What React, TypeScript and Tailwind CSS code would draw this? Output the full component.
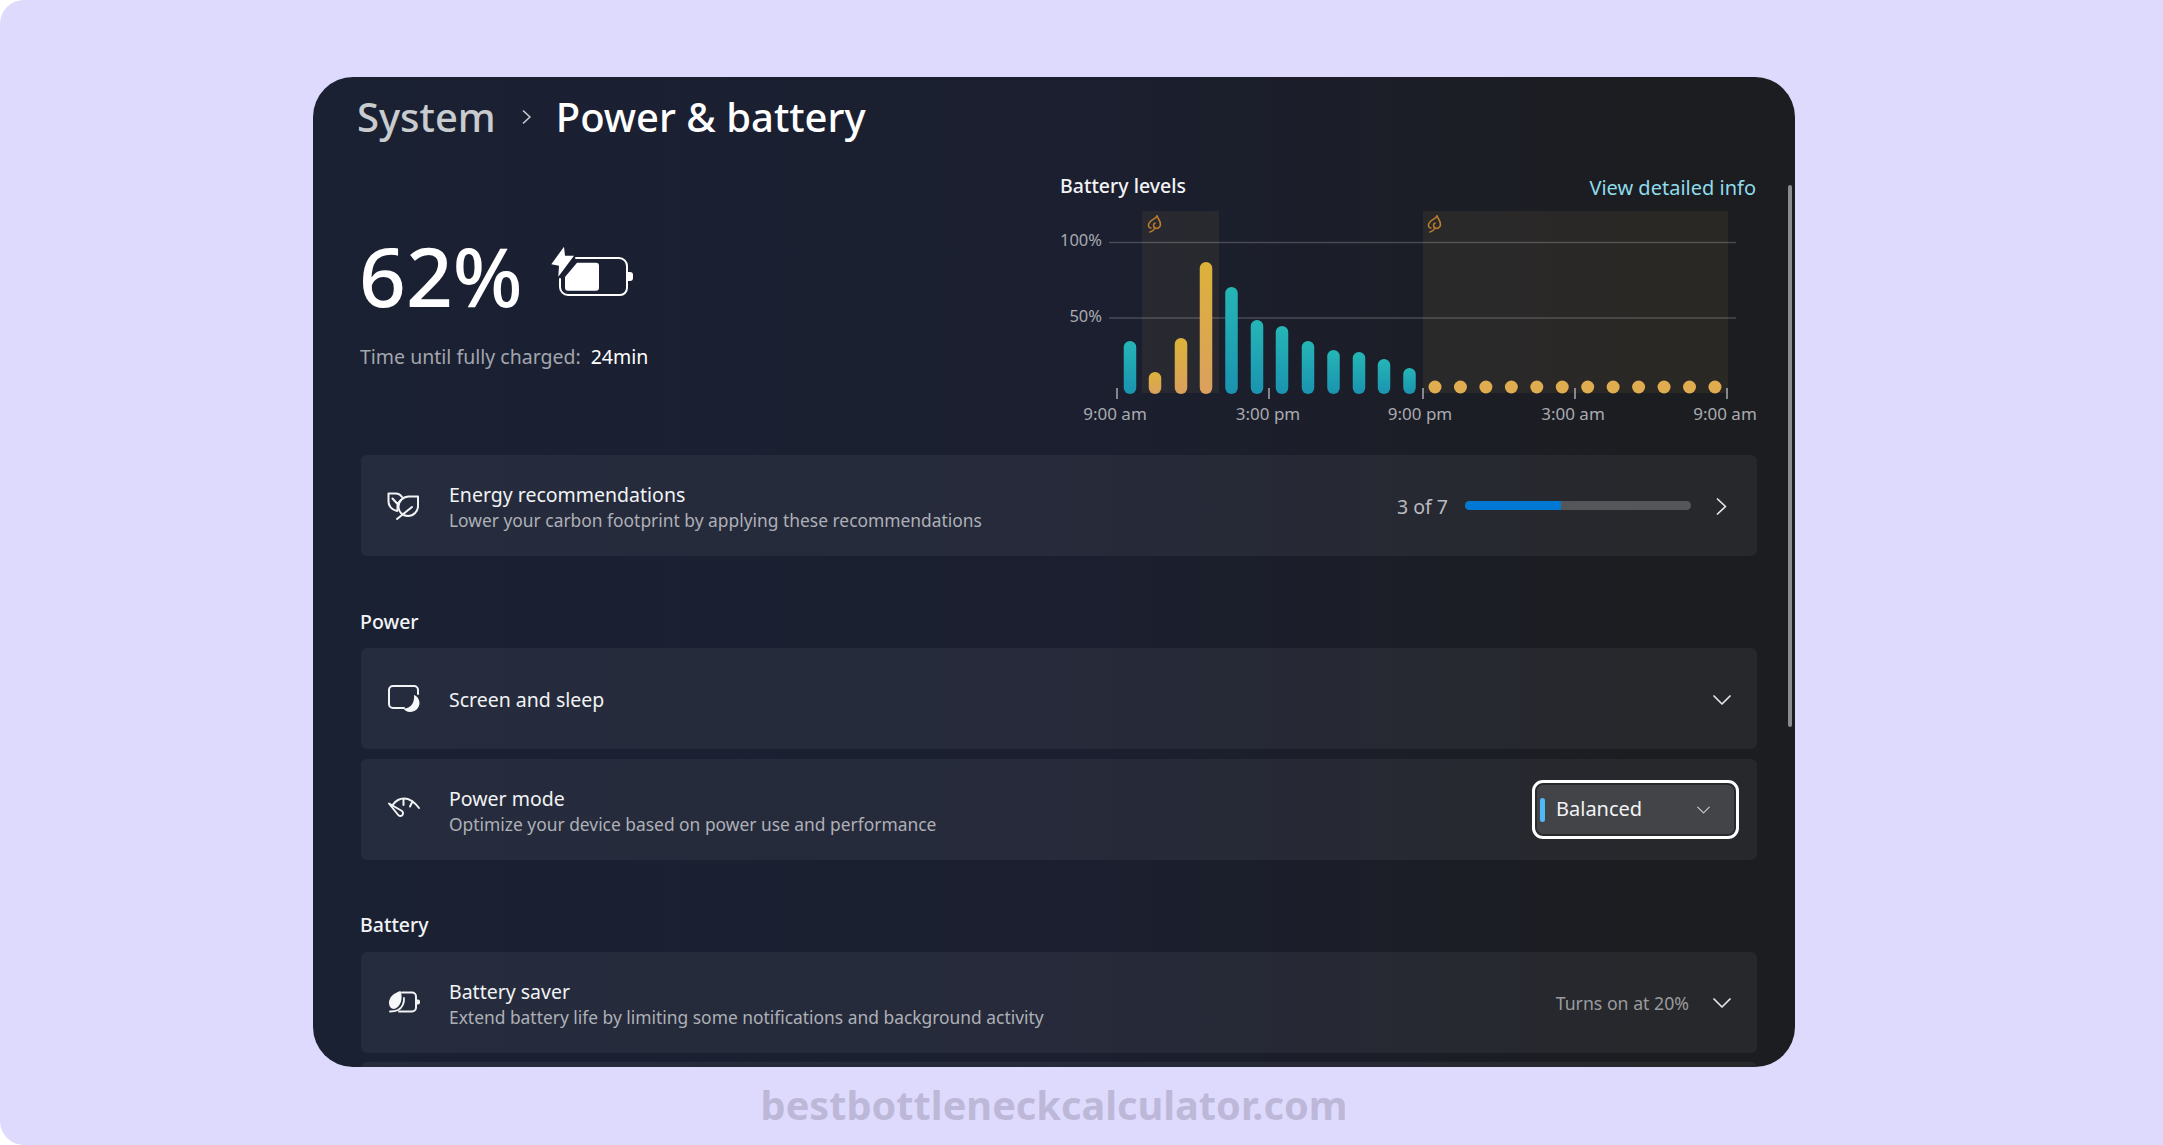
import React from 'react'

const ChevronDown = ({ className = 'w-[18px] h-[10px] text-[#e6e7ea]' }: { className?: string }) => (
  <svg viewBox="0 0 18 10" fill="none" className={className}>
    <path d="M1 1l8 8 8-8" stroke="currentColor" strokeWidth="1.7" strokeLinecap="round" strokeLinejoin="round" />
  </svg>
)

const ChevronRight = () => (
  <svg viewBox="0 0 11 17" fill="none" className="w-[11px] h-[17px] text-[#e6e7ea]">
    <path d="M1.5 1l8 7.5-8 7.5" stroke="currentColor" strokeWidth="1.7" strokeLinecap="round" strokeLinejoin="round" />
  </svg>
)

const LeavesIcon = () => (
  <svg viewBox="0 0 34 32" fill="none" stroke="#f2f3f5" strokeWidth="2" strokeLinecap="round" strokeLinejoin="round" className="w-[34px] h-[32px]">
    <path d="M15 7c-1.500-2.200-3.500-3.500-6-3.500H1.500V11c0 4.500 3 8.500 8.500 10" />
    <path d="M5.500 8.500l5 5.500 3.500-4M10.500 14v6.500" />
    <path d="M31 6.500H22c-6 0-10.500 4.500-10.500 10 0 5.500 4 9.500 9.500 9.500s10-4.500 10-10z" />
    <path d="M10 29l15-12" />
  </svg>
)

const ScreenSleepIcon = () => (
  <svg viewBox="0 0 34 32" fill="none" className="w-[34px] h-[32px]">
    <path d="M17 25H6a4 4 0 0 1-4-4V7a4 4 0 0 1 4-4h21a4 4 0 0 1 4 4v4" stroke="#f2f3f5" strokeWidth="2" strokeLinecap="round" />
    <path d="M27 12c3.300 1 5.500 4.500 5.500 8 0 5-4.500 9-9.500 9-3 0-5-1.500-6.500-3.500C23 26 28 20 27 12z" fill="#f7f8f9" />
  </svg>
)

const GaugeIcon = () => (
  <svg viewBox="0 0 34 30" fill="none" stroke="#f2f3f5" strokeWidth="2" strokeLinecap="round" strokeLinejoin="round" className="w-[34px] h-[30px]">
    <path d="M6 9.500C9 5.500 13 3.500 17 3.500c5.500 0 10.500 3.500 15 9.500" />
    <path d="M16.500 4v6M25.500 6.500l-2.500 5" />
    <path d="M2 8.500l13 7.500c2 1.500 1 5.500-2 5-1-.2-1.700-.8-2.200-1.500z" />
  </svg>
)

const BatteryLeafIcon = () => (
  <svg viewBox="0 0 34 26" fill="none" className="w-[34px] h-[26px]">
    <path d="M15 2.500h10a4 4 0 0 1 4 4v11a4 4 0 0 1-4 4H12" stroke="#f2f3f5" strokeWidth="2" strokeLinecap="round" />
    <path d="M29.500 9.500h1.500a2 2 0 0 1 2 2v1a2 2 0 0 1-2 2h-1.500z" fill="#f2f3f5" />
    <path d="M13.500 1C7 3 2 7 2 13c0 3 2 6 5 6 4-1 7-5 7.500-10 .3-3 0-6-1-8z" fill="#f7f8f9" />
    <path d="M17 8c.5 5-2 10-6 12-2 1-5 1.500-8 1.500" stroke="#f2f3f5" strokeWidth="1.800" strokeLinecap="round" />
  </svg>
)

const ChargingBatteryIcon = () => (
  <svg viewBox="0 0 110 80" fill="none" className="w-[110px] h-[80px] shrink-0">
    <path d="M25 21.700 12.300 39.300l7.700 1.400-.7 11L35 30.700h-9z" fill="#ffffff" />
    <path d="M37 33h43a8 8 0 0 1 8 8v22a7 7 0 0 1-7 7H29a8 8 0 0 1-8-8v-8" stroke="#ffffff" strokeWidth="2" strokeLinecap="round" />
    <path d="M38 37.700h19a3 3 0 0 1 3 3v22a3 3 0 0 1-3 3H29a3 3 0 0 1-3-3V52z" fill="#ffffff" />
    <path d="M89 47h2a3 3 0 0 1 3 3v3a3 3 0 0 1-3 3h-2z" fill="#ffffff" />
  </svg>
)

const tealBars = [
  { x: 1130, top: 341 },
  { x: 1231.5, top: 287 },
  { x: 1257, top: 320 },
  { x: 1282, top: 326 },
  { x: 1308, top: 341 },
  { x: 1333.5, top: 350 },
  { x: 1359, top: 352 },
  { x: 1384, top: 359 },
  { x: 1409.5, top: 368 },
]

const amberBars = [
  { x: 1155, top: 372 },
  { x: 1181, top: 338 },
  { x: 1206, top: 262 },
]

const dots = Array.from({ length: 12 }, (_, i) => 1435 + i * 25.45)

const ticks = [
  { x: 1117, label: '9:00 am', cx: 1115 },
  { x: 1269, label: '3:00 pm', cx: 1268 },
  { x: 1423, label: '9:00 pm', cx: 1420 },
  { x: 1575, label: '3:00 am', cx: 1573 },
  { x: 1727, label: '9:00 am', cx: 1725 },
]

const LeafMark = ({ x, y }: { x: number; y: number }) => (
  <g transform={`translate(${x} ${y})`} fill="none" stroke="#b87b2c" strokeWidth="1.600" strokeLinecap="round" strokeLinejoin="round">
    <path d="M10 1C9 4 2 5 1.500 10c-.2 2 1 3 2.500 3" />
    <path d="M10 1c1 3 4 5 3.500 9-.5 3-3.500 4-5.500 3-2-1-2-4 0-5" />
    <path d="M8 13c-1 2-3 3.500-5 4" />
  </g>
)

const BatteryChart = () => (
  <svg viewBox="1040 201 740 229" className="w-[740px] h-[229px] block">
    <defs>
      <linearGradient id="teal" x1="0" y1="0" x2="0" y2="1">
        <stop offset="0" stopColor="#25b6b6" />
        <stop offset="1" stopColor="#1a93b0" />
      </linearGradient>
      <linearGradient id="amber" x1="0" y1="0" x2="0" y2="1">
        <stop offset="0" stopColor="#dcb23a" />
        <stop offset="1" stopColor="#dba05e" />
      </linearGradient>
    </defs>
    <rect x="1142" y="211" width="77" height="182" fill="#d9b25f" fillOpacity="0.07" />
    <rect x="1423" y="211" width="305" height="182" fill="#d9b25f" fillOpacity="0.08" />
    <line x1="1109" x2="1736" y1="242.500" y2="242.500" stroke="#ffffff" strokeOpacity="0.2" strokeWidth="1.500" />
    <line x1="1109" x2="1736" y1="318" y2="318" stroke="#ffffff" strokeOpacity="0.2" strokeWidth="1.500" />
    <text x="1102" y="246" textAnchor="end" fontSize="16.500" fill="#a9abb0">100%</text>
    <text x="1102" y="322" textAnchor="end" fontSize="16.500" fill="#a9abb0">50%</text>
    <LeafMark x={1147} y={215} />
    <LeafMark x={1427} y={215} />
    {tealBars.map((b) => (
      <rect key={b.x} x={b.x - 6.25} y={b.top} width="12.500" height={394 - b.top} rx="6.250" fill="url(#teal)" />
    ))}
    {amberBars.map((b) => (
      <rect key={b.x} x={b.x - 6.25} y={b.top} width="12.500" height={394 - b.top} rx="6.250" fill="url(#amber)" />
    ))}
    {dots.map((x) => (
      <circle key={x} cx={x} cy="387" r="6.500" fill="#dfac4f" />
    ))}
    {ticks.map((t) => (
      <g key={t.x + t.label}>
        <line x1={t.x} x2={t.x} y1="388" y2="399" stroke="#a9abb0" strokeWidth="1.500" />
        <text x={t.cx} y="420" textAnchor="middle" fontSize="17" fill="#a9abb0">{t.label}</text>
      </g>
    ))}
  </svg>
)

const SettingRow = ({
  icon,
  title,
  subtitle,
  trailing,
}: {
  icon: React.ReactNode
  title: string
  subtitle?: string
  trailing: React.ReactNode
}) => (
  <div className="flex items-center h-[101px] rounded-md bg-white/[0.05] pl-[26px]">
    <div className="flex items-center justify-center w-[34px] shrink-0">{icon}</div>
    <div className="ml-[28px] pt-[2px] flex flex-col">
      <div className="text-[19.500px] leading-[26px] text-[#f2f3f5]">{title}</div>
      {subtitle && <div className="text-[17.400px] leading-[24px] text-[#aeb0b7]">{subtitle}</div>}
    </div>
    <div className="ml-auto flex items-center">{trailing}</div>
  </div>
)

export default function App() {
  return (
    <div className="bg-white">
      <div className="w-full h-[1145px] overflow-hidden rounded-l-[24px] bg-[#dedafe] pl-[313px] pt-[77px] font-['Noto_Sans',sans-serif]">
        <div className="relative w-[1482px] h-[990px] overflow-hidden rounded-[40px] bg-gradient-to-r from-[#1a2133] via-[#1b1f30] via-50% to-[#1c1d21] to-90%">
          {/* Scrollbar */}
          <div className="absolute left-[1475px] top-[108px] w-[4px] h-[542px] rounded-full bg-[#8a8b8e]" />

          {/* Breadcrumb */}
          <div className="flex items-center h-[80px] pl-[44px] text-[40px] font-medium">
            <span className="text-[#c9cccf]">System</span>
            <svg viewBox="0 0 10 14" fill="none" className="w-[10px] h-[14px] ml-[26px] mr-[24px]">
              <path d="M1.500 1l6.500 6-6.500 6" stroke="#c9cccf" strokeWidth="1.600" strokeLinecap="round" strokeLinejoin="round" />
            </svg>
            <span className="text-white">Power &amp; battery</span>
          </div>

          {/* Battery status and chart */}
          <div className="flex h-[298px] pl-[47px] pr-[15px]">
            <div className="flex flex-col pt-[68px]">
              <div className="flex h-[90px]">
                <span className="w-[180px] self-end text-[82px] leading-[80px] font-medium text-white -ml-[1px]">62%</span>
                <ChargingBatteryIcon />
              </div>
              <div className="mt-[28px] flex items-center h-[28px] text-[19.500px]">
                <span className="text-[#a3a6ad]">Time until fully charged:</span>
                <span className="ml-[10px] text-white">24min</span>
              </div>
            </div>
            <div className="ml-auto w-[740px] flex flex-col pt-[16px]">
              <div className="flex items-center justify-between h-[28px] pl-[20px] pr-[24px]">
                <span className="pb-[2px] text-[19.500px] font-medium text-[#f2f3f5]">Battery levels</span>
                <span className="pt-[2px] text-[20px] text-[#8fdcec]">View detailed info</span>
              </div>
              <BatteryChart />
            </div>
          </div>

          {/* Settings list */}
          <div className="w-[1396px] ml-[48px]">
            <SettingRow
              icon={<LeavesIcon />}
              title="Energy recommendations"
              subtitle="Lower your carbon footprint by applying these recommendations"
              trailing={
                <div className="flex items-center pr-[30px]">
                  <span className="pt-[2px] text-[19.500px] text-[#b9bbc0]">3 of 7</span>
                  <div className="ml-[17px] w-[226px] h-[9px] rounded-full bg-[#55565a] overflow-hidden">
                    <div className="w-[96px] h-full bg-[#0078d4]" />
                  </div>
                  <div className="ml-[25px] pt-[2px]"><ChevronRight /></div>
                </div>
              }
            />

            <div className="pt-[52px] pb-[12px] text-[19.500px] leading-[28px] font-medium text-[#f2f3f5] -ml-[1px]">Power</div>
            <SettingRow
              icon={<ScreenSleepIcon />}
              title="Screen and sleep"
              trailing={<div className="pr-[26px] pt-[2px]"><ChevronDown /></div>}
            />
            <div className="h-[10px]" />
            <SettingRow
              icon={<GaugeIcon />}
              title="Power mode"
              subtitle="Optimize your device based on power use and performance"
              trailing={
                <div className="pr-[18px]">
                  <div className="flex items-center w-[207px] h-[59px] rounded-[11px] border-[3px] border-white bg-[#434448] shadow-[inset_0_0_0_2px_#2a2b2f] pl-[5px] pr-[26px]">
                    <div className="w-[5px] h-[24px] rounded-full bg-[#4fb8f5]" />
                    <span className="ml-[11px] pb-[2px] text-[20px] text-[#f2f3f5]">Balanced</span>
                    <ChevronDown className="ml-auto w-[13px] h-[8px] text-[#c4c5c8]" />
                  </div>
                </div>
              }
            />

            <div className="pt-[51px] pb-[13px] text-[19.500px] leading-[28px] font-medium text-[#f2f3f5] -ml-[1px]">Battery</div>
            <SettingRow
              icon={<BatteryLeafIcon />}
              title="Battery saver"
              subtitle="Extend battery life by limiting some notifications and background activity"
              trailing={
                <div className="flex items-center pr-[26px] pt-[2px]">
                  <span className="text-[17.700px] text-[#9a9b9e]">Turns on at 20%</span>
                  <div className="ml-[24px]"><ChevronDown /></div>
                </div>
              }
            />
            <div className="mt-[9px] h-[20px] rounded-md bg-white/[0.05]" />
          </div>
        </div>
        <div className="w-[1482px] mt-[12px] text-center text-[39.700px] leading-[52px] font-bold text-[#bdb8d8]">
          bestbottleneckcalculator.com
        </div>
      </div>
    </div>
  )
}
